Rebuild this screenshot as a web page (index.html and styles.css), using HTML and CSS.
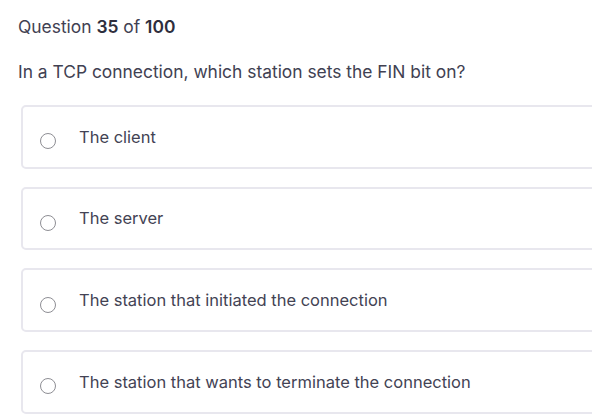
FILE: index.html
```html
<!DOCTYPE html>
<html>
<head>
<meta charset="utf-8">
<link rel="stylesheet" href="styles.css">
</head>
<body>
<div class="page">
  <div class="counter">Question <b>35</b> of <b>100</b></div>
  <div class="question">In a TCP connection, which station sets the FIN bit on?</div>
  <div class="options">
    <div class="option"><span class="radio"></span><span class="label">The client</span></div>
    <div class="option"><span class="radio"></span><span class="label">The server</span></div>
    <div class="option"><span class="radio"></span><span class="label">The station that initiated the connection</span></div>
    <div class="option"><span class="radio"></span><span class="label">The station that wants to terminate the connection</span></div>
  </div>
</div>
</body>
</html>
```
FILE: styles.css
```css
html, body {
  margin: 0;
  padding: 0;
  background: #ffffff;
  overflow: hidden;
}
.page {
  width: 592px;
  height: 414px;
  overflow: hidden;
  font-family: Inter, "Liberation Sans", Arial, sans-serif;
  color: #414152;
  padding: 17px 0 0 18px;
  box-sizing: border-box;
}
.counter {
  font-size: 17.4px;
  line-height: 20px;
}
.counter b {
  color: #2e2e3d;
  font-weight: 600;
}
.question {
  font-size: 17.4px;
  line-height: 20px;
  margin-top: 25px;
}
.options {
  margin-top: 23px;
  margin-left: 3px;
  display: flex;
  flex-direction: column;
  gap: 18.2px;
}
.option {
  width: 640px;
  height: 63.5px;
  box-sizing: border-box;
  border: 2px solid #e8e7ee;
  border-radius: 5px;
  display: flex;
  align-items: center;
  padding-left: 17px;
}
.radio {
  width: 16px;
  height: 16px;
  box-sizing: border-box;
  border: 1.5px solid #8e8e94;
  border-radius: 50%;
  flex: none;
  margin-top: 9px;
}
.label {
  margin-left: 23px;
  font-size: 16.5px;
  line-height: 20px;
  color: #434354;
}
```
